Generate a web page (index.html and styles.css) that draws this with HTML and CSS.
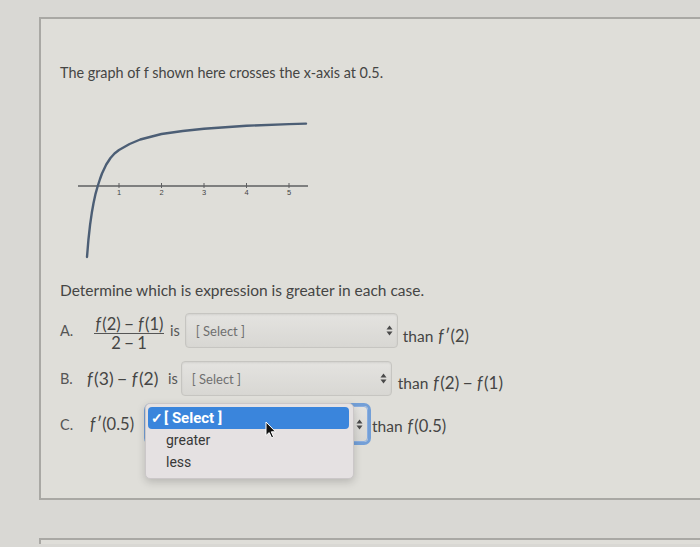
FILE: index.html
```html
<!DOCTYPE html>
<html>
<head>
<meta charset="utf-8">
<link rel="stylesheet" href="styles.css">
</head>
<body>
<div class="page">
  <section class="panel">
    <p class="intro">The graph of f shown here crosses the x-axis at 0.5.</p>
    <svg class="graph" width="250" height="150" viewBox="0 0 250 150">
      <line class="axis" x1="8" y1="71" x2="238" y2="71"/>
      <line class="tick" x1="49" y1="68" x2="49" y2="73"/>
      <line class="tick" x1="91.5" y1="68" x2="91.5" y2="73"/>
      <line class="tick" x1="134" y1="68" x2="134" y2="73"/>
      <line class="tick" x1="176.5" y1="68" x2="176.5" y2="73"/>
      <line class="tick" x1="219" y1="68" x2="219" y2="73"/>
      <text class="lbl" x="49" y="80">1</text>
      <text class="lbl" x="91.5" y="80">2</text>
      <text class="lbl" x="134" y="80">3</text>
      <text class="lbl" x="176.5" y="80">4</text>
      <text class="lbl" x="219" y="80">5</text>
      <polyline class="curve" points="17,142 18.4,125 20.1,109.7 21.8,97.8 23.5,88.2 25.6,78.6 27.75,71 30,64 32,58.5 36.25,49.5 40.5,43 44.5,38.5 49,35 59.6,29 70.25,24.5 91.5,19 112.75,16 134,13.7 176.5,10.8 219,9.1 236,8.6"/>
    </svg>
    <p class="prompt">Determine which is expression is greater in each case.</p>

    <div class="row row-a">
      <span class="letter letter-a">A.</span>
      <span class="frac">
        <span class="num m"><i>f</i>(2)<span class="minus">−</span><i>f</i>(1)</span>
        <span class="den m">2<span class="minus">−</span>1</span>
      </span>
      <span class="is">is</span>
      <div class="select select-a">
        <span class="sel-text">[ Select ]</span>
        <svg class="arrows" width="7" height="11" viewBox="0 0 7 11"><path d="M3.5 0.5 L6.5 4.5 L0.5 4.5 Z M3.5 10.5 L6.5 6.5 L0.5 6.5 Z"/></svg>
      </div>
      <span class="than than-a">than <span class="m"><i>f</i>′(2)</span></span>
    </div>

    <div class="row row-b">
      <span class="letter letter-b">B.</span>
      <span class="expr expr-b m"><i>f</i>(3)<span class="minus">−</span><i>f</i>(2)</span>
      <span class="is">is</span>
      <div class="select select-b">
        <span class="sel-text">[ Select ]</span>
        <svg class="arrows" width="7" height="11" viewBox="0 0 7 11"><path d="M3.5 0.5 L6.5 4.5 L0.5 4.5 Z M3.5 10.5 L6.5 6.5 L0.5 6.5 Z"/></svg>
      </div>
      <span class="than than-b">than <span class="m"><i>f</i>(2)<span class="minus">−</span><i>f</i>(1)</span></span>
    </div>

    <div class="row row-c">
      <span class="letter letter-c">C.</span>
      <span class="expr expr-c m"><i>f</i>′(0.5)</span>
      <div class="select select-c">
        <svg class="arrows" width="7" height="11" viewBox="0 0 7 11"><path d="M3.5 0.5 L6.5 4.5 L0.5 4.5 Z M3.5 10.5 L6.5 6.5 L0.5 6.5 Z"/></svg>
        <ul class="menu">
          <li class="opt opt-active"><span class="check">✓</span>[ Select ]</li>
          <li class="opt">greater</li>
          <li class="opt">less</li>
        </ul>
        <svg class="cursor" width="12" height="18" viewBox="0 0 12 18"><path d="M1 1 L1 14.5 L4.2 11.6 L6.6 16.8 L8.6 15.9 L6.3 10.8 L10.6 10.8 Z"/></svg>
      </div>
      <span class="than than-c">than <span class="m"><i>f</i>(0.5)</span></span>
    </div>
  </section>
  <section class="panel2"></section>
</div>
</body>
</html>
```

FILE: styles.css
```css
html, body {
  margin: 0;
  padding: 0;
  background: #d9d8d4;
  width: 700px;
  height: 547px;
  overflow: hidden;
}

.page {
  padding-top: 17px;
  font-family: Lato, "Open Sans", sans-serif;
  color: #454544;
}

.panel {
  margin-left: 39px;
  height: 479px;
  border: 2px solid #a9a8a4;
  border-right: none;
  background: #dfded9;
}

.panel2 {
  margin-left: 39px;
  margin-top: 38px;
  height: 4px;
  border-top: 2px solid #a9a8a4;
  border-left: 2px solid #a9a8a4;
  background: #dfded9;
}

.intro {
  margin: 44px 0 0 19px;
  font-size: 14.4px;
  line-height: 20px;
}

.graph {
  display: block;
  margin: 32px 0 0 29px;
}

.axis {
  stroke: #5e5f61;
  stroke-width: 1.4;
}

.tick {
  stroke: #5e5f61;
  stroke-width: 1;
}

.lbl {
  font-family: "Liberation Sans", sans-serif;
  font-size: 7.5px;
  fill: #444;
  text-anchor: middle;
}

.curve {
  fill: none;
  stroke: #4c5e75;
  stroke-width: 2.4;
  stroke-linejoin: round;
  stroke-linecap: round;
}

.prompt {
  margin: 15px 0 0 19px;
  font-size: 15.5px;
  line-height: 20px;
}

.row {
  display: flex;
  align-items: center;
  margin-left: 19px;
  height: 35px;
  font-size: 15px;
}

.row-a { margin-top: 13px; }
.row-b { margin-top: 13px; }
.row-c { margin-top: 10px; height: 36px; }

.m {
  font-size: 16.5px;
  white-space: nowrap;
}

.m i {
  font-style: italic;
  margin: 0 1.5px 0 1px;
}

.minus {
  margin: 0 3.5px;
}

.letter {
  font-size: 14.5px;
  color: #555;
}

.letter-a { width: 31px; }
.letter-b { width: 26px; }
.letter-c { width: 29px; }

.frac {
  display: flex;
  flex-direction: column;
  align-items: center;
  width: 76px;
  align-self: flex-start;
  margin-top: 2px;
}

.num {
  line-height: 18px;
  border-bottom: 1.5px solid #555;
  padding: 0 1px;
}

.den {
  line-height: 19px;
}

.is {
  font-size: 14.5px;
  color: #555;
  margin: 0 5px 0 3px;
}

.expr-b { width: 82px; font-size: 17.5px; }
.row-b .is { margin: 0 3px 0 0; }
.expr-c { width: 48px; margin-right: 10px; }

.select {
  position: relative;
  box-sizing: border-box;
  height: 35px;
  display: flex;
  align-items: center;
  justify-content: space-between;
  padding: 0 4px 0 10px;
  border: 1px solid #c6c5c1;
  border-radius: 4px;
  background: linear-gradient(#e4e3e0, #d8d7d3);
  box-shadow: inset 0 1px 2px rgba(0,0,0,0.08);
}

.select-a { width: 213px; }
.select-b { width: 211px; }
.select-c {
  width: 221px;
  height: 36px;
  justify-content: flex-end;
  border-color: #8aaee0;
  box-shadow: 0 0 0 3px #739fd7;
}

.sel-text {
  font-size: 13px;
  color: #6f6f6f;
}

.arrows path {
  fill: #4a4a4a;
}

.than {
  font-size: 15.5px;
  margin-left: 5px;
  white-space: nowrap;
}

.than-a { margin-top: 11px; }
.than-b { margin-top: 7px; margin-left: 6px; }
.than-b .m { font-size: 17px; }
.than-c { margin-top: 3px; margin-left: 4px; }

.menu {
  position: absolute;
  left: -3px;
  top: -4px;
  width: 209px;
  height: 76px;
  box-sizing: border-box;
  margin: 0;
  padding: 3px 4px 0 2px;
  list-style: none;
  background: #e5e1e2;
  border: 1px solid #cbc7c8;
  border-radius: 5px;
  box-shadow: 0 3px 8px rgba(0,0,0,0.18);
  font-family: Roboto, "Liberation Sans", sans-serif;
}

.opt {
  height: 22px;
  line-height: 22px;
  padding-left: 18px;
  font-size: 14px;
  color: #383838;
  border-radius: 4px;
}

.opt-active {
  background: #3a85dc;
  color: #fff;
  font-weight: 700;
  font-size: 15px;
  padding-left: 3px;
}

.check {
  display: inline-block;
  width: 13px;
  font-size: 14px;
}

.cursor {
  position: absolute;
  left: 117px;
  top: 14px;
}

.cursor path {
  fill: #111;
  stroke: #fff;
  stroke-width: 1;
  stroke-linejoin: round;
}
```
